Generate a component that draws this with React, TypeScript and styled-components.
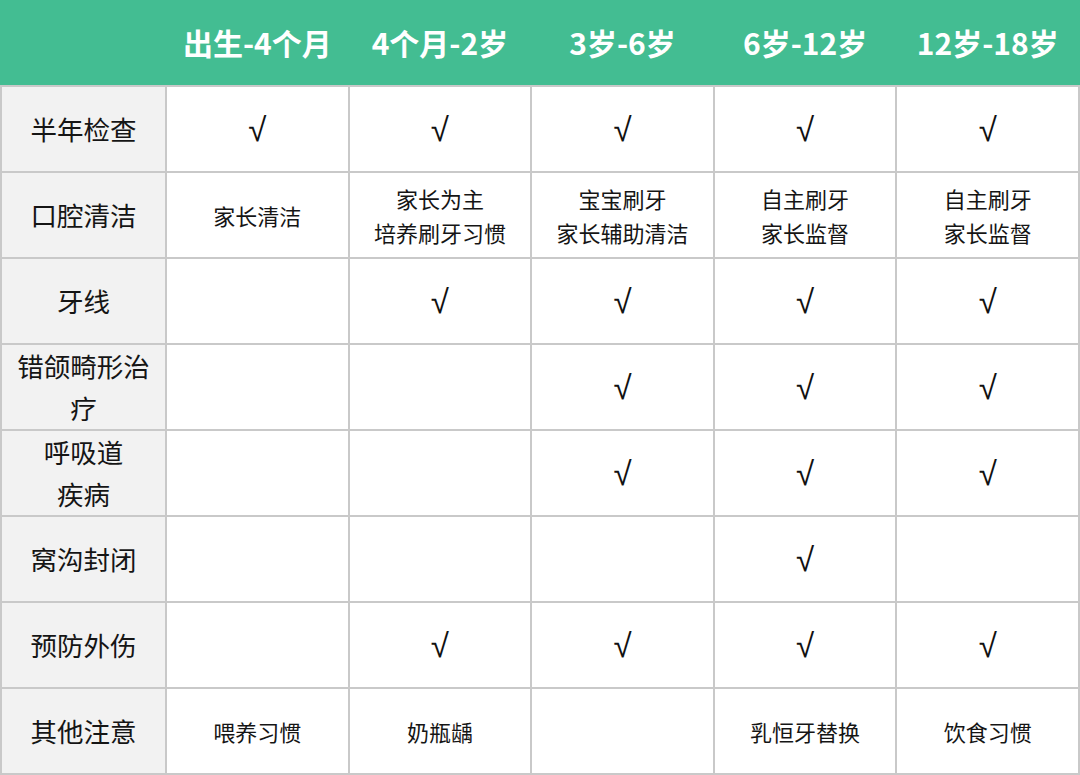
import React from "react"
import styled, { createGlobalStyle } from "styled-components"

const GlobalStyle = createGlobalStyle`
    html, body {
        margin: 0;
        padding: 0;
        background: #ffffff;
    }
    body {
        font-family: "Noto Sans CJK SC", "Noto Sans", sans-serif;
        color: #141414;
    }
`

const columns = ["出生-4个月", "4个月-2岁", "3岁-6岁", "6岁-12岁", "12岁-18岁"]

type RowType = {
    label: string[]
    cells: (string | null)[]
}

const V = "√"

const rows: RowType[] = [
    { label: ["半年检查"], cells: [V, V, V, V, V] },
    { label: ["口腔清洁"], cells: ["家长清洁", "家长为主\n培养刷牙习惯", "宝宝刷牙\n家长辅助清洁", "自主刷牙\n家长监督", "自主刷牙\n家长监督"] },
    { label: ["牙线"], cells: [null, V, V, V, V] },
    { label: ["错颌畸形治", "疗"], cells: [null, null, V, V, V] },
    { label: ["呼吸道", "疾病"], cells: [null, null, V, V, V] },
    { label: ["窝沟封闭"], cells: [null, null, null, V, null] },
    { label: ["预防外伤"], cells: [null, V, V, V, V] },
    { label: ["其他注意"], cells: ["喂养习惯", "奶瓶龋", null, "乳恒牙替换", "饮食习惯"] },
]

export default function App() {
    return (
        <>
            <GlobalStyle />
            <TableFrame>
                <HeaderRow>
                    <HeaderCell />
                    {columns.map((c) => (
                        <HeaderCell key={c}>{c}</HeaderCell>
                    ))}
                </HeaderRow>
                <Body>
                    {rows.map((row, i) => (
                        <React.Fragment key={i}>
                            <LabelCell>
                                {row.label.map((l) => (
                                    <span key={l}>{l}</span>
                                ))}
                            </LabelCell>
                            {row.cells.map((cell, j) => (
                                <Cell key={j}>
                                    {cell === V ? (
                                        <Check>{V}</Check>
                                    ) : (
                                        cell &&
                                        cell.split("\n").map((line) => <span key={line}>{line}</span>)
                                    )}
                                </Cell>
                            ))}
                        </React.Fragment>
                    ))}
                </Body>
            </TableFrame>
        </>
    )
}

const TableFrame = styled.div`
    width: 1080px;
    height: 775px;
    box-sizing: border-box;
    display: flex;
    flex-direction: column;
    background: #c9c9c9;
    padding: 0 2px 2px 2px;
    gap: 2px;
`

const gridColumns = `163px repeat(5, 1fr)`

const HeaderRow = styled.div`
    display: grid;
    grid-template-columns: ${gridColumns};
    column-gap: 2px;
    height: 88px;
    margin: 0 -2px;
    padding: 0 2px;
    background: #43bd92;
`

const HeaderCell = styled.div`
    display: flex;
    align-items: center;
    justify-content: center;
    padding-bottom: 2px;
    color: #ffffff;
    font-size: 30px;
    font-weight: 700;
    white-space: nowrap;
`

const Body = styled.div`
    flex: 1;
    display: grid;
    grid-template-columns: ${gridColumns};
    grid-auto-rows: 1fr;
    gap: 2px;
`

const LabelCell = styled.div`
    display: flex;
    flex-direction: column;
    align-items: center;
    justify-content: center;
    background: #f2f2f2;
    font-size: 26.5px;
    line-height: 42px;
    color: #151515;
`

const Cell = styled.div`
    display: flex;
    flex-direction: column;
    align-items: center;
    justify-content: center;
    background: #ffffff;
    font-size: 22px;
    line-height: 34px;
    color: #151515;
`

const Check = styled.span`
    font-size: 33px;
    line-height: 1;
    color: #111111;
    font-family: "Liberation Sans", "DejaVu Sans", sans-serif;
`
